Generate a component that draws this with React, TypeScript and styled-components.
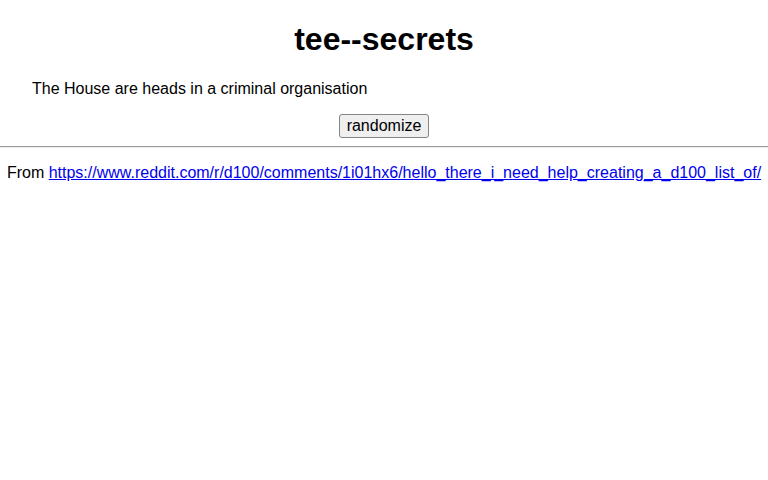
import React, { useState } from 'react';
import styled, { createGlobalStyle } from 'styled-components';

const GlobalStyle = createGlobalStyle`
  body {
    margin: 0;
    font-family: "Liberation Sans", Arial, sans-serif;
    font-size: 16px;
    color: #000;
    background: #fff;
  }
`;

const Title = styled.h1`
  text-align: center;
  font-size: 32px;
  font-weight: bold;
  margin: 21.44px 0;
`;

const Secret = styled.p`
  margin: 16px 0;
  padding: 0 32px;
  line-height: normal;
`;

const Center = styled.div`
  text-align: center;
`;

const Button = styled.button`
  font-family: "Liberation Sans", Arial, sans-serif;
  font-size: 16px;
  padding: 2px 7px;
  background: #efefef;
  color: #000;
  border: 1px solid #858585;
  border-radius: 3px;
  cursor: pointer;
`;

const Rule = styled.hr`
  margin: 8px 0;
  border: none;
  border-top: 1px solid #9a9a9a;
  border-bottom: 1px solid #eee;
`;

const Source = styled.p`
  margin: 16px 0;
  text-align: center;
`;

const Link = styled.a`
  color: #0000ee;
  text-decoration: underline;
`;

const secrets = [
  'The House are heads in a criminal organisation',
  'The House owes a great debt to a dragon',
  'The House once served a forgotten god',
];

export default function App() {
  const [index, setIndex] = useState(0);
  const url = 'https://www.reddit.com/r/d100/comments/1i01hx6/hello_there_i_need_help_creating_a_d100_list_of/';

  return (
    <>
      <GlobalStyle />
      <Title>tee--secrets</Title>
      <Secret>{secrets[index]}</Secret>
      <Center>
        <Button onClick={() => setIndex(Math.floor(Math.random() * secrets.length))}>randomize</Button>
      </Center>
      <Rule />
      <Source>
        From <Link href={url}>{url}</Link>
      </Source>
    </>
  );
}
